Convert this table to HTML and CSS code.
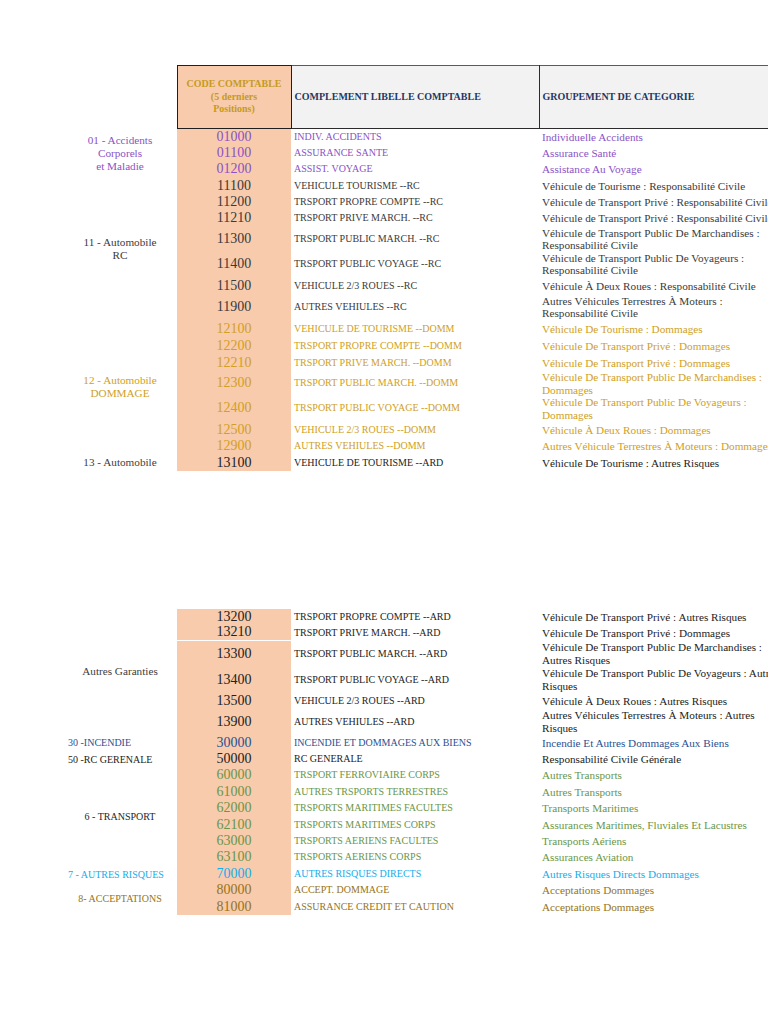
FILE: index.html
```html
<!DOCTYPE html>
<html lang="fr">
<head>
<meta charset="utf-8">
<title>Codes comptables</title>
<link rel="stylesheet" href="styles.css">
</head>
<body>
<div class="page">
  <table class="sheet">
    <colgroup><col class="c-label"><col class="c-code"><col class="c-lib"><col class="c-grp"></colgroup>
    <thead>
      <tr class="head">
        <th class="blank"></th>
        <th class="h-code">CODE COMPTABLE<br>(5 derniers<br>Positions)</th>
        <th class="h-lib">COMPLEMENT LIBELLE COMPTABLE</th>
        <th class="h-grp">GROUPEMENT DE CATEGORIE</th>
      </tr>
    </thead>
    <tbody>
      <tr class="h16 purple"><td class="label" rowspan="3">01 - Accidents<br>Corporels<br>et Maladie</td><td class="code">01000</td><td class="lib">INDIV. ACCIDENTS</td><td class="grp">Individuelle Accidents</td></tr>
      <tr class="h16 purple"><td class="code">01100</td><td class="lib">ASSURANCE SANTE</td><td class="grp">Assurance Santé</td></tr>
      <tr class="h16 purple"><td class="code">01200</td><td class="lib">ASSIST. VOYAGE</td><td class="grp">Assistance Au Voyage</td></tr>
      <tr class="h16 dark"><td class="label" rowspan="7">11 - Automobile<br>RC</td><td class="code">11100</td><td class="lib">VEHICULE TOURISME --RC</td><td class="grp">Véhicule de Tourisme : Responsabilité Civile</td></tr>
      <tr class="h16 dark"><td class="code">11200</td><td class="lib">TRSPORT PROPRE COMPTE --RC</td><td class="grp">Véhicule de Transport Privé : Responsabilité Civile</td></tr>
      <tr class="h16 dark"><td class="code">11210</td><td class="lib">TRSPORT PRIVE MARCH. --RC</td><td class="grp">Véhicule de Transport Privé : Responsabilité Civile</td></tr>
      <tr class="h24 dark"><td class="code">11300</td><td class="lib">TRSPORT PUBLIC MARCH. --RC</td><td class="grp">Véhicule de Transport Public De Marchandises :<br>Responsabilité Civile</td></tr>
      <tr class="h25 dark"><td class="code">11400</td><td class="lib">TRSPORT PUBLIC VOYAGE --RC</td><td class="grp">Véhicule de Transport Public De Voyageurs :<br>Responsabilité Civile</td></tr>
      <tr class="h18 dark"><td class="code">11500</td><td class="lib">VEHICULE 2/3 ROUES --RC</td><td class="grp">Véhicule À Deux Roues : Responsabilité Civile</td></tr>
      <tr class="h22 dark"><td class="code">11900</td><td class="lib">AUTRES VEHIULES --RC</td><td class="grp">Autres Véhicules Terrestres À Moteurs :<br>Responsabilité Civile</td></tr>
      <tr class="h18b gold"><td class="label" rowspan="7">12 - Automobile<br>DOMMAGE</td><td class="code">12100</td><td class="lib">VEHICULE DE TOURISME --DOMM</td><td class="grp">Véhicule De Tourisme : Dommages</td></tr>
      <tr class="h16 gold"><td class="code">12200</td><td class="lib">TRSPORT PROPRE COMPTE --DOMM</td><td class="grp">Véhicule De Transport Privé : Dommages</td></tr>
      <tr class="h16 gold"><td class="code">12210</td><td class="lib">TRSPORT PRIVE MARCH. --DOMM</td><td class="grp">Véhicule De Transport Privé : Dommages</td></tr>
      <tr class="h25 gold"><td class="code">12300</td><td class="lib">TRSPORT PUBLIC MARCH. --DOMM</td><td class="grp">Véhicule De Transport Public De Marchandises :<br>Dommages</td></tr>
      <tr class="h25 gold"><td class="code">12400</td><td class="lib">TRSPORT PUBLIC VOYAGE --DOMM</td><td class="grp">Véhicule De Transport Public De Voyageurs :<br>Dommages</td></tr>
      <tr class="h17 gold"><td class="code">12500</td><td class="lib">VEHICULE 2/3 ROUES --DOMM</td><td class="grp">Véhicule À Deux Roues : Dommages</td></tr>
      <tr class="h16 gold"><td class="code">12900</td><td class="lib">AUTRES VEHIULES --DOMM</td><td class="grp">Autres Véhicule Terrestres À Moteurs : Dommages</td></tr>
      <tr class="h16 black"><td class="label t-dark">13 - Automobile</td><td class="code">13100</td><td class="lib">VEHICULE DE TOURISME --ARD</td><td class="grp">Véhicule De Tourisme : Autres Risques</td></tr>
    </tbody>
  </table>

  <table class="sheet second">
    <colgroup><col class="c-label"><col class="c-code"><col class="c-lib"><col class="c-grp"></colgroup>
    <tbody>
      <tr class="h16 black"><td class="label t-dark" rowspan="6">Autres Garanties</td><td class="code">13200</td><td class="lib">TRSPORT PROPRE COMPTE --ARD</td><td class="grp">Véhicule De Transport Privé : Autres Risques</td></tr>
      <tr class="h15 black"><td class="code">13210</td><td class="lib">TRSPORT PRIVE MARCH. --ARD</td><td class="grp">Véhicule De Transport Privé : Dommages</td></tr>
      <tr class="h26b black sep"><td class="code">13300</td><td class="lib">TRSPORT PUBLIC MARCH. --ARD</td><td class="grp">Véhicule De Transport Public De Marchandises :<br>Autres Risques</td></tr>
      <tr class="h25b black"><td class="code">13400</td><td class="lib">TRSPORT PUBLIC VOYAGE --ARD</td><td class="grp">Véhicule De Transport Public De Voyageurs : Autres<br>Risques</td></tr>
      <tr class="h16 black"><td class="code">13500</td><td class="lib">VEHICULE 2/3 ROUES --ARD</td><td class="grp">Véhicule À Deux Roues : Autres Risques</td></tr>
      <tr class="h25b black"><td class="code">13900</td><td class="lib">AUTRES VEHIULES --ARD</td><td class="grp">Autres Véhicules Terrestres À Moteurs : Autres<br>Risques</td></tr>
      <tr class="h16 blue"><td class="label caps left">30 -INCENDIE</td><td class="code">30000</td><td class="lib">INCENDIE ET DOMMAGES AUX BIENS</td><td class="grp">Incendie Et Autres Dommages Aux Biens</td></tr>
      <tr class="h16 black"><td class="label caps left">50 -RC GERENALE</td><td class="code">50000</td><td class="lib">RC GENERALE</td><td class="grp">Responsabilité Civile Générale</td></tr>
      <tr class="h16 green"><td class="label caps t-black" rowspan="6">6 - TRANSPORT</td><td class="code">60000</td><td class="lib">TRSPORT FERROVIAIRE CORPS</td><td class="grp">Autres Transports</td></tr>
      <tr class="h16 green"><td class="code">61000</td><td class="lib">AUTRES TRSPORTS TERRESTRES</td><td class="grp">Autres Transports</td></tr>
      <tr class="h16 green"><td class="code">62000</td><td class="lib">TRSPORTS MARITIMES FACULTES</td><td class="grp">Transports Maritimes</td></tr>
      <tr class="h16 green"><td class="code">62100</td><td class="lib">TRSPORTS MARITIMES CORPS</td><td class="grp">Assurances Maritimes, Fluviales Et Lacustres</td></tr>
      <tr class="h16 green"><td class="code">63000</td><td class="lib">TRSPORTS AERIENS FACULTES</td><td class="grp">Transports Aériens</td></tr>
      <tr class="h16 green"><td class="code">63100</td><td class="lib">TRSPORTS AERIENS CORPS</td><td class="grp">Assurances Aviation</td></tr>
      <tr class="h16 sky"><td class="label caps left">7 - AUTRES RISQUES</td><td class="code">70000</td><td class="lib">AUTRES RISQUES DIRECTS</td><td class="grp">Autres Risques Directs Dommages</td></tr>
      <tr class="h16 brown"><td class="label caps" rowspan="2">8- ACCEPTATIONS</td><td class="code">80000</td><td class="lib">ACCEPT. DOMMAGE</td><td class="grp">Acceptations Dommages</td></tr>
      <tr class="h16 brown"><td class="code">81000</td><td class="lib">ASSURANCE CREDIT ET CAUTION</td><td class="grp">Acceptations Dommages</td></tr>
    </tbody>
  </table>
</div>
</body>
</html>
```

FILE: styles.css
```css
html, body {
  margin: 0;
  padding: 0;
  background: #ffffff;
  overflow: hidden;
}

body {
  font-family: "Liberation Serif", "Times New Roman", serif;
}

.page {
  width: 768px;
  height: 1024px;
  overflow: hidden;
  box-sizing: border-box;
  padding: 65px 0 0 63px;
}

.sheet {
  border-collapse: collapse;
  table-layout: fixed;
  width: 736px;
}

.second {
  margin-top: 137.6px;
}

.c-label { width: 114px; }
.c-code { width: 114px; }
.c-lib { width: 248px; }
.c-grp { width: 260px; }

.sheet td {
  padding: 0 3px;
  line-height: 12.5px;
  white-space: nowrap;
  vertical-align: middle;
  overflow: visible;
}

/* header */
.head { height: 63px; }

.head th {
  font-size: 10px;
  font-weight: bold;
  line-height: 12.5px;
  text-align: left;
  padding: 0 3px;
  color: #1f3864;
  background: #f2f2f2;
  border-top: 1.5px solid #5a5a5a;
  border-bottom: 1.5px solid #2b2b2b;
  white-space: nowrap;
}

.head .blank {
  background: transparent;
  border: none;
}

.head .h-code {
  background: #f8cbad;
  color: #c59b1c;
  text-align: center;
  border: 1.5px solid #1f1f1f;
}

.head .h-lib {
  border-right: 1.5px solid #2b2b2b;
}

/* body cells */
.sheet .code {
  background: #f8cbad;
  text-align: center;
  font-size: 14px;
  padding: 0;
}

.sheet .lib {
  font-size: 10px;
}

.sheet .grp {
  font-size: 11.2px;
}

.sheet .label {
  text-align: center;
  font-size: 11.2px;
  line-height: 13px;
}

.sheet .label.caps {
  font-size: 10px;
}

.sheet .label.left {
  text-align: left;
  padding-left: 5px;
}

.sep .code {
  border-top: 1.5px solid #ffffff;
}

/* row heights */
.h15 { height: 15.6px; }
.h16 { height: 16.4px; }
.h17 { height: 17.2px; }
.h18 { height: 18px; }
.h18b { height: 18.6px; }
.h22 { height: 22px; }
.h24 { height: 24.6px; }
.h25 { height: 25px; }
.h25b { height: 25.6px; }
.h26 { height: 26px; }
.h26b { height: 26.4px; }

/* colours */
.purple { color: #8a52c6; }
.dark { color: #3a3a3a; }
.black { color: #222222; }
.gold { color: #d0a024; }
.blue { color: #2a5094; }
.green { color: #6a9648; }
.sky { color: #14adee; }
.brown { color: #947421; }

.t-dark { color: #404040; }
.t-black { color: #262626; }
```
